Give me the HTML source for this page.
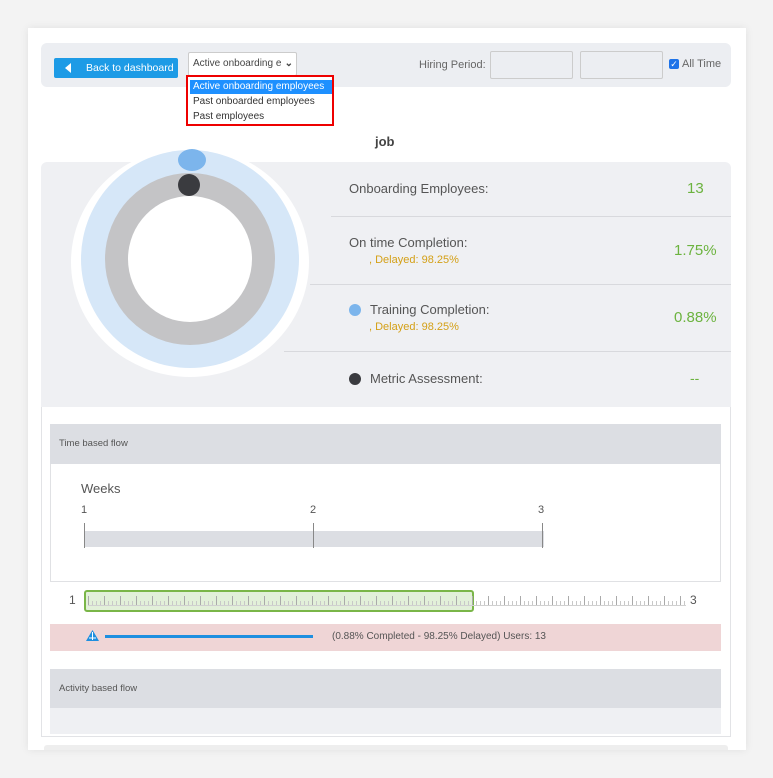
<!DOCTYPE html>
<html><head><style>
*{margin:0;padding:0;box-sizing:border-box}
body{width:773px;height:778px;background:#f3f3f3;font-family:"Liberation Sans",sans-serif;position:relative;overflow:hidden;color:#555}
.a{position:absolute}
.card{left:28px;top:28px;width:718px;height:722px;background:#fff;box-shadow:0 0 8px rgba(0,0,0,.08)}
.t{font-size:12px;white-space:nowrap}
</style></head><body>
<div class="a card"></div>
<div class="a" style="left:41px;top:43px;width:690px;height:44px;background:#eceef2;border-radius:6px"></div>
<div class="a t" style="left:54px;top:58px;width:124px;height:20px;background:#1d9be6;border-radius:2px;color:#fff;font-size:10.5px;line-height:20px;padding-left:32px">Back to dashboard</div>
<div class="a" style="left:65px;top:63px;width:0;height:0;border-top:5px solid transparent;border-bottom:5px solid transparent;border-right:6px solid #fff"></div>
<div class="a t" style="left:188px;top:52px;width:109px;height:24px;background:#fff;border:1px solid #ccc;border-radius:2px;font-size:10px;line-height:22px;padding-left:4px;color:#444;overflow:hidden">Active onboarding e<span style="position:absolute;right:3px;font-weight:bold">&#8964;</span></div>
<div class="a" style="left:186px;top:75px;width:148px;height:51px;border:2px solid #e00;background:#fff"></div>
<div class="a t" style="left:190px;top:80px;width:142px;height:14px;background:#1e90ff;color:#fff;font-size:10px;line-height:14px;padding-left:3px;overflow:hidden">Active onboarding employees</div>
<div class="a t" style="left:193px;top:96px;font-size:10px;color:#333">Past onboarded employees</div>
<div class="a t" style="left:193px;top:111px;font-size:10px;color:#333">Past employees</div>
<div class="a t" style="left:419px;top:59px;font-size:11px;color:#666">Hiring Period:</div>
<div class="a" style="left:490px;top:51px;width:83px;height:28px;background:#eceef2;border:1px solid #ccc;border-radius:2px"></div>
<div class="a" style="left:580px;top:51px;width:83px;height:28px;background:#eceef2;border:1px solid #ccc;border-radius:2px"></div>
<div class="a" style="left:669px;top:59px;width:10px;height:10px;background:#1e73e8;border-radius:2px;color:#fff;font-size:9px;line-height:10px;text-align:center">✓</div>
<div class="a t" style="left:682px;top:58px;font-size:11px;color:#666">All Time</div>
<div class="a t" style="left:375px;top:134px;font-size:13px;font-weight:bold;color:#444">job</div>

<div class="a" style="left:41px;top:162px;width:690px;height:245px;background:#eff0f3;border-radius:6px 6px 0 0"></div>
<div class="a" style="left:331px;top:216px;width:400px;height:1px;background:#d8d9dd"></div>
<div class="a" style="left:310px;top:284px;width:421px;height:1px;background:#d8d9dd"></div>
<div class="a" style="left:284px;top:351px;width:447px;height:1px;background:#d8d9dd"></div>
<svg class="a" style="left:0;top:0" width="773" height="420">
<ellipse cx="190" cy="262" rx="119" ry="115" fill="#fff"/>
<ellipse cx="190" cy="259" rx="109" ry="109" fill="#d6e7f8"/>
<ellipse cx="190" cy="259" rx="85" ry="86" fill="#c4c4c6"/>
<ellipse cx="190" cy="259" rx="62" ry="63" fill="#fff"/>
<ellipse cx="192" cy="160" rx="14" ry="11" fill="#7cb5ec"/>
<circle cx="189" cy="185" r="11" fill="#3a3b3f"/>
<circle cx="355" cy="310" r="6" fill="#7cb5ec"/>
<circle cx="355" cy="379" r="6" fill="#3a3b3f"/>
</svg>
<div class="a t" style="left:349px;top:181px;font-size:13px">Onboarding Employees:</div>
<div class="a t" style="left:687px;top:180px;font-size:15px;color:#6cb33f">13</div>
<div class="a t" style="left:349px;top:235px;font-size:13px">On time Completion:</div>
<div class="a t" style="left:369px;top:254px;font-size:11px;color:#d4a017">, Delayed: 98.25%</div>
<div class="a t" style="left:674px;top:242px;font-size:15px;color:#6cb33f">1.75%</div>
<div class="a t" style="left:370px;top:302px;font-size:13px">Training Completion:</div>
<div class="a t" style="left:369px;top:321px;font-size:11px;color:#d4a017">, Delayed: 98.25%</div>
<div class="a t" style="left:674px;top:309px;font-size:15px;color:#6cb33f">0.88%</div>
<div class="a t" style="left:370px;top:371px;font-size:13px">Metric Assessment:</div>
<div class="a t" style="left:690px;top:370px;font-size:14px;color:#6cb33f">--</div>

<div class="a" style="left:41px;top:407px;width:690px;height:330px;border:1px solid #e2e3e6;border-top:0;background:#fff"></div>
<div class="a" style="left:50px;top:424px;width:671px;height:158px;border:1px solid #e0e1e4"></div>
<div class="a t" style="left:50px;top:424px;width:671px;height:40px;background:#dcdee3;font-size:9.5px;line-height:40px;padding-left:9px;color:#555">Time based flow</div>
<div class="a t" style="left:81px;top:481px;font-size:13px">Weeks</div>
<div class="a t" style="left:81px;top:504px;font-size:11px">1</div>
<div class="a t" style="left:310px;top:504px;font-size:11px">2</div>
<div class="a t" style="left:538px;top:504px;font-size:11px">3</div>
<div class="a" style="left:84px;top:531px;width:460px;height:16px;background:#dcdee3"></div>
<div class="a" style="left:84px;top:523px;width:1px;height:25px;background:#888"></div>
<div class="a" style="left:313px;top:523px;width:1px;height:25px;background:#888"></div>
<div class="a" style="left:542px;top:523px;width:1px;height:25px;background:#888"></div>

<div class="a t" style="left:69px;top:593px;font-size:12px">1</div>
<div class="a t" style="left:690px;top:593px;font-size:12px">3</div>
<div class="a" style="left:84px;top:590px;width:390px;height:22px;background:#e2f0d9;border:2px solid #7ab648;border-radius:3px"></div>
<div class="a" style="left:88px;top:601px;width:598px;height:4px;background:repeating-linear-gradient(90deg,#c8c8c8 0 1px,transparent 1px 4px)"></div>
<div class="a" style="left:88px;top:596px;width:598px;height:9px;background:repeating-linear-gradient(90deg,#aaa 0 1px,transparent 1px 16px)"></div>
<div class="a" style="left:88px;top:605px;width:598px;height:1px;background:#d0d0d0"></div>

<div class="a" style="left:50px;top:624px;width:671px;height:27px;background:#efd5d6"></div>
<svg class="a" style="left:85px;top:629px" width="15" height="13"><path d="M7.5 1 L14 12 L1 12 Z" fill="#1e8fe0"/><path d="M7.5 3 V11 M4 9 H11" stroke="#fff" stroke-width="1"/></svg>
<div class="a" style="left:105px;top:635px;width:208px;height:3px;background:#1e8fe0"></div>
<div class="a t" style="left:332px;top:631px;font-size:10px;color:#555">(0.88% Completed - 98.25% Delayed) Users: 13</div>

<div class="a t" style="left:50px;top:669px;width:671px;height:39px;background:#dcdee3;font-size:9.5px;line-height:39px;padding-left:9px;color:#555">Activity based flow</div>
<div class="a" style="left:50px;top:708px;width:671px;height:26px;background:#eff0f3"></div>
<div class="a" style="left:44px;top:745px;width:684px;height:5px;background:#eee;border-radius:3px 3px 0 0"></div>
</body></html>
